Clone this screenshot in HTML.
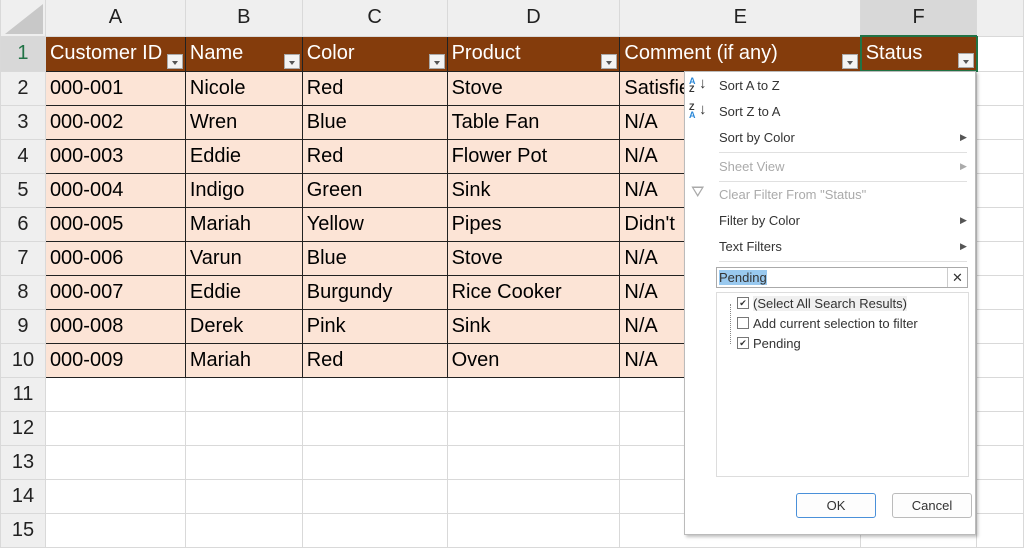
<!DOCTYPE html><html><head><style>
body{margin:0;width:1024px;height:538px;overflow:hidden;background:#fff;font-family:"Liberation Sans",sans-serif;position:relative}
table{border-collapse:collapse;table-layout:fixed;position:absolute;left:0;top:0}
td{border:1px solid #d9d9d9;height:33px;padding:0 0 0 4px;font-size:20px;white-space:nowrap;overflow:hidden;color:#000;position:relative}
tr.h td{height:35px;background:#efefef;text-align:center;padding:0;font-size:20px;color:#222;border-top:none}
td.r{background:#efefef;text-align:center;padding:0;font-size:20px;color:#222}
td.d{background:#fce4d6;border:1px solid #222}
td.t{background:#843c0c;color:#fff;border:1px solid #222}
.fb{position:absolute;right:2px;bottom:2px;width:16px;height:15px;background:#f3f3f3;border:1px solid #aaa;box-sizing:border-box}
.fb:after{content:"";position:absolute;left:4px;top:6px;border:3px solid transparent;border-top:4px solid #555}
#m{position:absolute;left:684px;top:71px;width:292px;height:464px;background:#fff;border:1px solid #bbb;box-sizing:border-box;box-shadow:2px 2px 3px rgba(0,0,0,.25);font-size:13px;color:#333}
.mi{position:absolute;left:34px}
.ar{position:absolute;left:275px;font-size:9px;color:#555}
.sep{position:absolute;left:34px;right:8px;height:1px;background:#e0e0e0}
.g{color:#aaa}
.row{position:absolute;left:20px;display:flex;align-items:center;height:18px}
.cb{display:inline-block;width:10px;height:10px;border:1px solid #777;margin-right:4px;font-size:9px;line-height:10px;text-align:center;background:#fff}
.btn{position:absolute;top:421px;height:23px;border:1px solid #bbb;border-radius:3px;background:#fdfdfd;text-align:center;line-height:23px;font-size:13px}
</style></head><body>
<table>
<colgroup><col style="width:45px"><col style="width:140px"><col style="width:117px"><col style="width:145px"><col style="width:173px"><col style="width:241px"><col style="width:116px"><col style="width:47px"></colgroup>
<tr class="h"><td style="background:#efefef"></td><td>A</td><td>B</td><td>C</td><td>D</td><td>E</td><td style="background:#d8d8d8;border-bottom:2px solid #217346">F</td><td></td></tr>
<tr><td class="r" style="color:#217346;background:#d8d8d8">1</td><td class="t">Customer ID<span class="fb"></span></td><td class="t">Name<span class="fb"></span></td><td class="t">Color<span class="fb"></span></td><td class="t">Product<span class="fb"></span></td><td class="t">Comment (if any)<span class="fb"></span></td><td class="t" style="border:2px solid #217346">Status<span class="fb"></span></td><td></td></tr>
<tr><td class="r">2</td><td class="d">000-001</td><td class="d">Nicole</td><td class="d">Red</td><td class="d">Stove</td><td class="d">Satisfied</td><td></td><td></td></tr>
<tr><td class="r">3</td><td class="d">000-002</td><td class="d">Wren</td><td class="d">Blue</td><td class="d">Table Fan</td><td class="d">N/A</td><td></td><td></td></tr>
<tr><td class="r">4</td><td class="d">000-003</td><td class="d">Eddie</td><td class="d">Red</td><td class="d">Flower Pot</td><td class="d">N/A</td><td></td><td></td></tr>
<tr><td class="r">5</td><td class="d">000-004</td><td class="d">Indigo</td><td class="d">Green</td><td class="d">Sink</td><td class="d">N/A</td><td></td><td></td></tr>
<tr><td class="r">6</td><td class="d">000-005</td><td class="d">Mariah</td><td class="d">Yellow</td><td class="d">Pipes</td><td class="d">Didn't</td><td></td><td></td></tr>
<tr><td class="r">7</td><td class="d">000-006</td><td class="d">Varun</td><td class="d">Blue</td><td class="d">Stove</td><td class="d">N/A</td><td></td><td></td></tr>
<tr><td class="r">8</td><td class="d">000-007</td><td class="d">Eddie</td><td class="d">Burgundy</td><td class="d">Rice Cooker</td><td class="d">N/A</td><td></td><td></td></tr>
<tr><td class="r">9</td><td class="d">000-008</td><td class="d">Derek</td><td class="d">Pink</td><td class="d">Sink</td><td class="d">N/A</td><td></td><td></td></tr>
<tr><td class="r">10</td><td class="d">000-009</td><td class="d">Mariah</td><td class="d">Red</td><td class="d">Oven</td><td class="d">N/A</td><td></td><td></td></tr>
<tr><td class="r">11</td><td></td><td></td><td></td><td></td><td></td><td></td><td></td></tr>
<tr><td class="r">12</td><td></td><td></td><td></td><td></td><td></td><td></td><td></td></tr>
<tr><td class="r">13</td><td></td><td></td><td></td><td></td><td></td><td></td><td></td></tr>
<tr><td class="r">14</td><td></td><td></td><td></td><td></td><td></td><td></td><td></td></tr>
<tr><td class="r">15</td><td></td><td></td><td></td><td></td><td></td><td></td><td></td></tr>
</table>
<div style="position:absolute;width:0;height:0;border-left:38px solid transparent;border-bottom:30px solid #c8c8c8;left:5px;top:4px"></div>
<div id="m">
<div style="position:absolute;left:4px;top:5px;font-size:9px;line-height:8px;color:#2b88d8;font-weight:bold">A<br><span style="color:#333">Z</span></div><div style="position:absolute;left:14px;top:3px;font-size:15px">↓</div>
<div class="mi" style="top:6px">Sort A to Z</div>
<div style="position:absolute;left:4px;top:31px;font-size:9px;line-height:8px;color:#333;font-weight:bold">Z<br><span style="color:#2b88d8">A</span></div><div style="position:absolute;left:14px;top:29px;font-size:15px">↓</div>
<div class="mi" style="top:32px">Sort Z to A</div>
<div class="mi" style="top:58px">Sort by Color</div><div class="ar" style="top:60px">▶</div>
<div class="sep" style="top:80px"></div>
<div class="mi g" style="top:87px">Sheet View</div><div class="ar g" style="top:89px">▶</div>
<div class="sep" style="top:109px"></div>
<div class="g" style="position:absolute;left:6px;top:112px;font-size:16px">⛛</div>
<div class="mi g" style="top:115px">Clear Filter From "Status"</div>
<div class="mi" style="top:141px">Filter by Color</div><div class="ar" style="top:143px">▶</div>
<div class="mi" style="top:167px">Text Filters</div><div class="ar" style="top:169px">▶</div>
<div class="sep" style="top:189px"></div>
<div style="position:absolute;left:31px;top:195px;width:252px;height:21px;border:1px solid #aaa;box-sizing:border-box"><span style="background:#99c9ef;margin-left:2px;line-height:19px">Pending</span><span style="position:absolute;right:0;top:0;width:19px;height:19px;border-left:1px solid #ccc;text-align:center;line-height:19px">✕</span></div>
<div style="position:absolute;left:31px;top:220px;width:253px;height:185px;border:1px solid #ddd;box-sizing:border-box">
<div style="position:absolute;left:13px;top:11px;width:8px;height:40px;border-left:1px dotted #888"></div>
<div class="row" style="top:1px"><span class="cb">✔</span><span style="background:#f0f0f0">(Select All Search Results)</span></div>
<div class="row" style="top:21px"><span class="cb"></span>Add current selection to filter</div>
<div class="row" style="top:41px"><span class="cb">✔</span>Pending</div>
</div>
<div class="btn" style="left:111px;width:78px;border:1px solid #4a90d9">OK</div>
<div class="btn" style="left:207px;width:78px">Cancel</div>
</div>
</body></html>
